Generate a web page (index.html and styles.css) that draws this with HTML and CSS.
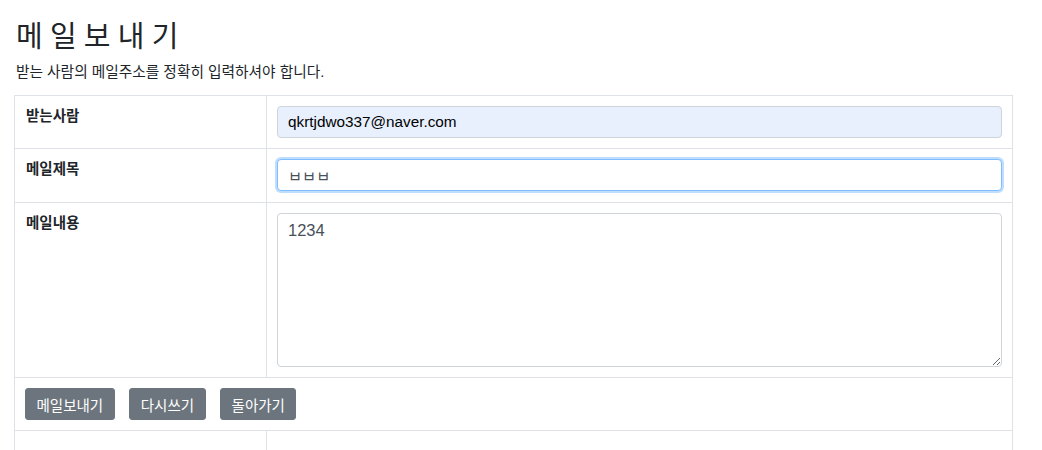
FILE: index.html
```html
<!DOCTYPE html>
<html lang="ko">
<head>
<meta charset="utf-8">
<title>메일보내기</title>
<link rel="stylesheet" href="styles.css">
</head>
<body>
<div class="page">
  <h2 class="title">메 일 보 내 기</h2>
  <p class="lead">받는 사람의 메일주소를 정확히 입력하셔야 합니다.</p>
  <table class="mail-table">
    <tr>
      <th class="label">받는사람</th>
      <td class="field"><input class="control autofill" type="text" value="qkrtjdwo337@naver.com"></td>
    </tr>
    <tr class="row-subject">
      <th class="label">메일제목</th>
      <td class="field"><input class="control focused" type="text" value="ㅂㅂㅂ"></td>
    </tr>
    <tr>
      <th class="label">메일내용</th>
      <td class="field"><textarea class="control area">1234</textarea></td>
    </tr>
    <tr>
      <td class="actions" colspan="2">
        <div class="btn-row">
          <button class="btn" type="button">메일보내기</button>
          <button class="btn" type="button">다시쓰기</button>
          <button class="btn" type="button">돌아가기</button>
        </div>
      </td>
    </tr>
    <tr>
      <td class="empty"></td>
      <td class="empty"></td>
    </tr>
  </table>
</div>
</body>
</html>
```
FILE: styles.css
```css
html, body {
  margin: 0;
  padding: 0;
  background: #fff;
}
body {
  font-family: "Liberation Sans", "Noto Sans CJK KR", sans-serif;
  color: #212529;
}
.page {
  padding: 0 29px 0 14px;
}
.title {
  margin: 19px 0 0 2px;
  font-size: 29px;
  font-weight: 400;
  letter-spacing: -0.4px;
  line-height: 36px;
  color: #212529;
}
.lead {
  margin: 7px 0 13px 2px;
  font-size: 14.7px;
  line-height: 20px;
}
.mail-table {
  width: 100%;
  border-collapse: collapse;
}
.mail-table th,
.mail-table td {
  border: 1px solid #dee2e6;
  padding: 10px;
  vertical-align: top;
  text-align: left;
}
.label {
  width: 230px;
  font-size: 14.5px;
  font-weight: 700;
  line-height: 20px;
  padding-left: 11px !important;
}
.field {
  padding: 10px 10px 10px 11px;
}
.row-subject .field {
  padding-bottom: 11px;
}
.control {
  display: block;
  box-sizing: border-box;
  width: 100%;
  height: 32px;
  margin: 0;
  padding: 4px 10px;
  font-family: "Liberation Sans", "Noto Sans CJK KR", sans-serif;
  font-size: 15.3px;
  color: #495057;
  background: #fff;
  border: 1px solid #ced4da;
  border-radius: 4px;
  outline: none;
}
.autofill {
  background: #e8f0fe;
  color: #000;
}
.focused {
  border-color: #80bdff;
  box-shadow: 0 0 0 2px rgba(0, 123, 255, 0.25);
}
.area {
  height: 154px;
  padding: 5px 10px;
  font-size: 16.5px;
  resize: vertical;
  line-height: 22px;
}
.actions {
  padding: 10px !important;
}
.btn-row {
  display: flex;
  gap: 14.5px;
}
.btn {
  box-sizing: border-box;
  height: 32px;
  padding: 0 10.5px;
  font-family: "Liberation Sans", "Noto Sans CJK KR", sans-serif;
  font-size: 14.5px;
  color: #fff;
  background: #6c757d;
  border: 1px solid #6c757d;
  border-radius: 3px;
}
.empty {
  height: 20px;
}
```
